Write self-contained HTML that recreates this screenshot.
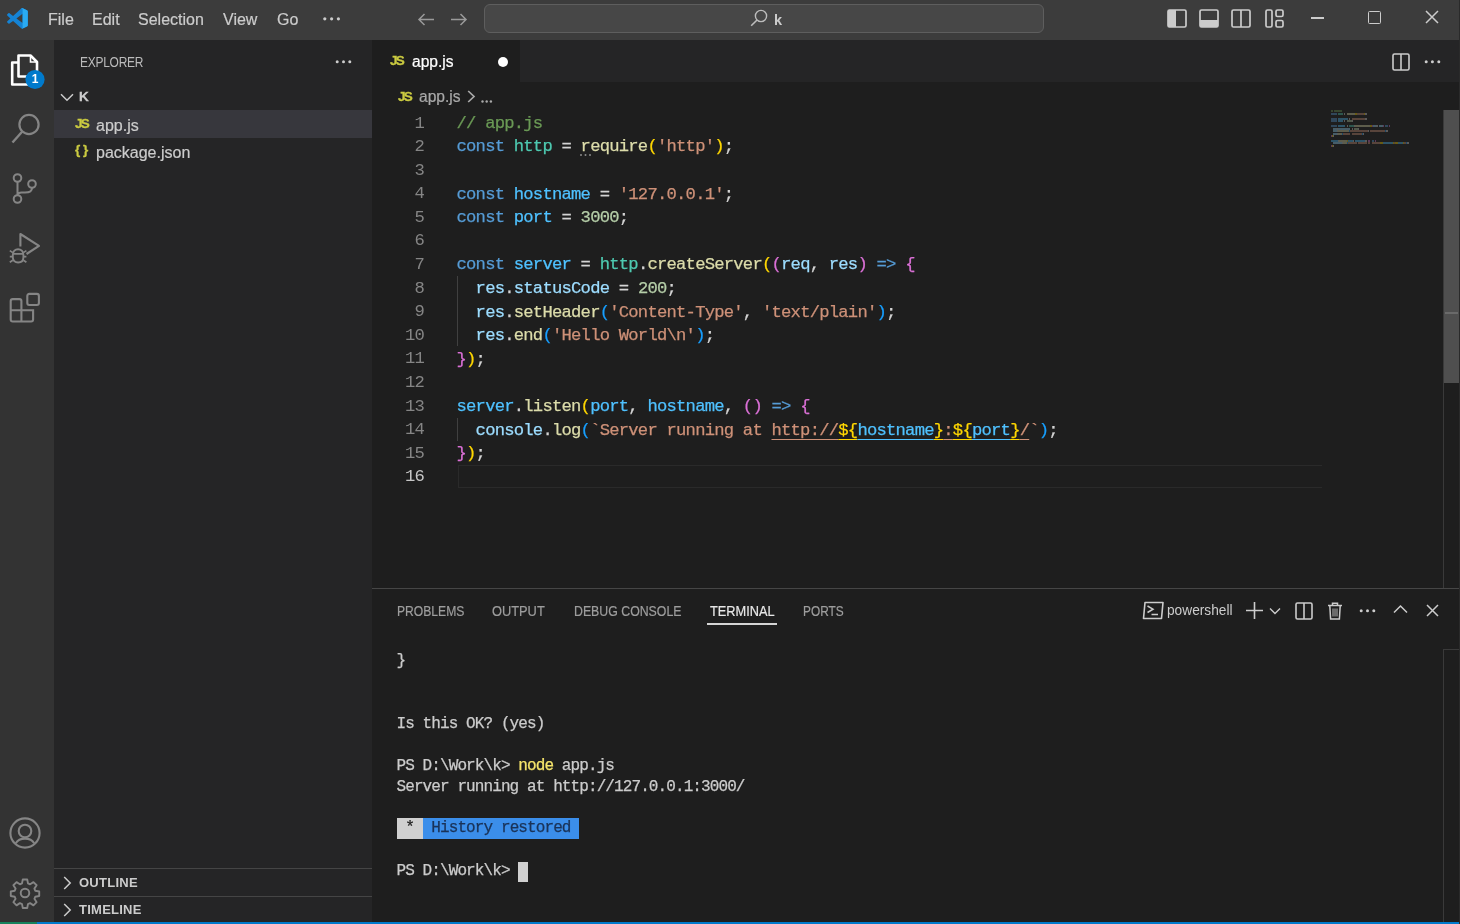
<!DOCTYPE html>
<html><head><meta charset="utf-8">
<style>
*{margin:0;padding:0;box-sizing:border-box}
html,body{width:1460px;height:924px;overflow:hidden;background:#1e1e1e;}
body{filter:blur(0.4px);font-family:"Liberation Sans",sans-serif;color:#cccccc}
.a{position:absolute}
svg{position:absolute;overflow:visible}
#title{left:0;top:0;width:1460px;height:40px;background:#3c3c3c}
.menu{top:10.5px;font-size:16px;color:#cccccc;line-height:18px;-webkit-text-stroke:0.2px currentColor}
#act{left:0;top:40px;width:54px;height:882px;background:#333333}
#side{left:54px;top:40px;width:318px;height:882px;background:#252526}
#tabs{left:372px;top:40px;width:1088px;height:42px;background:#252526}
#tab1{left:372px;top:40px;width:148px;height:42px;background:#1e1e1e}
#editor{left:372px;top:82px;width:1088px;height:506px;background:#1e1e1e}
#panel{left:372px;top:588px;width:1088px;height:334px;background:#1e1e1e;border-top:1px solid #464646}
#status{left:0;top:922px;width:1460px;height:2px;background:#007acc}
.code{font-family:"Liberation Mono",monospace;font-size:17.2px;letter-spacing:-0.77px;white-space:pre;line-height:23.6px;-webkit-text-stroke:0.25px currentColor}
.ln{font-family:"Liberation Mono",monospace;font-size:17.2px;letter-spacing:-0.77px;color:#858585;text-align:right;line-height:23.6px}
.term{font-family:"Liberation Mono",monospace;font-size:16px;letter-spacing:-0.9px;white-space:pre;line-height:20.95px;color:#cccccc;-webkit-text-stroke:0.25px currentColor}
.k{color:#569cd6}.cm{color:#6a9955}.v{color:#9cdcfe}.c{color:#4fc1ff}.t{color:#4ec9b0}.f{color:#dcdcaa}.s{color:#ce9178}.n{color:#b5cea8}.p{color:#d4d4d4}
.b1{color:#ffd700}.b2{color:#da70d6}.b3{color:#179fff}
.u{text-decoration:underline;text-decoration-color:currentColor;text-decoration-skip-ink:none;text-decoration-thickness:1.4px;text-underline-offset:4px}
.ptab{top:602.8px;font-size:14px;color:#9d9d9d;line-height:16px;transform-origin:0 0;-webkit-text-stroke:0.2px currentColor}
.side-t{font-size:16px;line-height:18px;color:#cccccc;-webkit-text-stroke:0.2px currentColor}
.js{font-family:"Liberation Sans",sans-serif;font-weight:bold;color:#cbcb41;font-size:13.5px;letter-spacing:-1.7px;line-height:12px;-webkit-text-stroke:0.3px currentColor}
#mini i{position:absolute;height:2px}
.sec{font-size:13px;font-weight:bold;letter-spacing:0.25px;color:#cccccc;line-height:14px}
</style></head><body>
<div id="title" class="a"></div>
<div id="act" class="a"></div>
<div id="side" class="a"></div>
<div id="tabs" class="a"></div>
<div id="tab1" class="a"></div>
<div id="editor" class="a"></div>
<div id="panel" class="a"></div>
<div id="status" class="a"></div>
<div class="a" style="left:0;top:922px;width:37px;height:2px;background:#16825d"></div>
<div class="a" style="left:1459px;top:0;width:1px;height:924px;background:#2a2a2a"></div>

<!-- ===== title bar ===== -->
<svg style="left:6.6px;top:7.5px" width="20.8" height="20.8" viewBox="0 0 100 100">
  <path fill="#1583d4" d="M96 10.8 75.5 1c-2.4-1.1-5.2-.6-7.1 1.2L29.2 38 12.1 25c-1.6-1.2-3.8-1.1-5.2.2l-5.5 5c-1.8 1.6-1.8 4.5 0 6.1L16.2 50 1.4 63.6c-1.8 1.6-1.8 4.5 0 6.1l5.5 5c1.5 1.3 3.7 1.4 5.2.2L29.2 62l39.2 35.8c1.9 1.8 4.7 2.3 7.1 1.2L96 89.2c2.5-1.2 4-3.7 4-6.4V17.2c0-2.7-1.6-5.2-4-6.4zM75 72.7 45.3 50 75 27.3z"/>
  <path fill="#2aabf3" d="M68.4 97.8c1.9 1.8 4.7 2.3 7.1 1.2L96 89.2c2.5-1.2 4-3.7 4-6.4V17.2c0-2.7-1.6-5.2-4-6.4L75.5 1c-2.4-1.1-5.2-.6-7.1 1.2 2.3-2.3 6.6-.7 6.6 2.6v90.4c0 3.3-4.3 4.9-6.6 2.6z"/>
</svg>
<div class="a menu" style="left:48px">File</div>
<div class="a menu" style="left:92px">Edit</div>
<div class="a menu" style="left:138px">Selection</div>
<div class="a menu" style="left:223px">View</div>
<div class="a menu" style="left:277px">Go</div>
<svg style="left:323px;top:17px" width="18" height="4"><circle cx="1.8" cy="1.8" r="1.6" fill="#cccccc"/><circle cx="8.6" cy="1.8" r="1.6" fill="#cccccc"/><circle cx="15.4" cy="1.8" r="1.6" fill="#cccccc"/></svg>
<!-- nav arrows -->
<svg style="left:417px;top:13px" width="18" height="13" viewBox="0 0 18 13"><path d="M17 6.5H2M7.5 1 2 6.5 7.5 12" fill="none" stroke="#9a9a9a" stroke-width="1.5"/></svg>
<svg style="left:450px;top:13px" width="18" height="13" viewBox="0 0 18 13"><path d="M1 6.5H16M10.5 1 16 6.5 10.5 12" fill="none" stroke="#9a9a9a" stroke-width="1.5"/></svg>
<!-- search box -->
<div class="a" style="left:484px;top:4px;width:560px;height:29px;border-radius:6px;background:#474747;border:1px solid #5e5e5e"></div>
<svg style="left:750px;top:9px" width="18" height="18" viewBox="0 0 18 18"><circle cx="11" cy="7" r="5.6" fill="none" stroke="#bdbdbd" stroke-width="1.4"/><path d="M7 11 1.2 16.8" stroke="#bdbdbd" stroke-width="1.6"/></svg>
<div class="a" style="left:774px;top:11.5px;font-size:14.5px;font-weight:bold;line-height:17px;color:#cccccc">k</div>
<!-- layout icons -->
<svg style="left:1167px;top:9px" width="20" height="19" viewBox="0 0 20 19"><rect x="1" y="1" width="18" height="17" rx="1.5" fill="none" stroke="#cccccc" stroke-width="1.7"/><rect x="1" y="1" width="8" height="17" fill="#cccccc"/></svg>
<svg style="left:1199px;top:9px" width="20" height="19" viewBox="0 0 20 19"><rect x="1" y="1" width="18" height="17" rx="1.5" fill="none" stroke="#cccccc" stroke-width="1.7"/><rect x="1" y="11" width="18" height="7" fill="#cccccc"/></svg>
<svg style="left:1231px;top:9px" width="20" height="19" viewBox="0 0 20 19"><rect x="1" y="1" width="18" height="17" rx="1.5" fill="none" stroke="#cccccc" stroke-width="1.7"/><path d="M10 1V18" stroke="#cccccc" stroke-width="1.7"/></svg>
<svg style="left:1265px;top:9px" width="19" height="19" viewBox="0 0 19 19"><rect x="1" y="1" width="6" height="17" rx="1.5" fill="none" stroke="#cccccc" stroke-width="1.7"/><rect x="11" y="1" width="7" height="6.5" rx="1.5" fill="none" stroke="#cccccc" stroke-width="1.7"/><rect x="11" y="11.5" width="7" height="6.5" rx="1.5" fill="none" stroke="#cccccc" stroke-width="1.7"/></svg>
<div class="a" style="left:1311px;top:17px;width:13px;height:1.6px;background:#cccccc"></div>
<div class="a" style="left:1368px;top:11px;width:13px;height:12.5px;border:1.5px solid #cccccc;border-radius:1.5px"></div>
<svg style="left:1425px;top:10px" width="14" height="14" viewBox="0 0 14 14"><path d="M1 1 13 13M13 1 1 13" stroke="#cccccc" stroke-width="1.5"/></svg>

<!-- ===== activity bar ===== -->
<svg style="left:10px;top:53px" width="30" height="34" viewBox="0 0 30 34">
  <path d="M8.5 9.5H2.2V31.5H19V25" fill="none" stroke="#ffffff" stroke-width="2.6" stroke-linejoin="round"/>
  <path d="M8.5 2.5H20.5L27 9V23.5H8.5Z" fill="none" stroke="#ffffff" stroke-width="2.6" stroke-linejoin="round"/>
  <path d="M20.5 2.5V9H27" fill="none" stroke="#ffffff" stroke-width="1.6"/>
</svg>
<svg style="left:25px;top:69px" width="21" height="21"><circle cx="10" cy="10.5" r="9.6" fill="#007acc" stroke="#333333" stroke-width="0"/></svg>
<div class="a" style="left:25px;top:71px;width:20px;text-align:center;font-size:12px;font-weight:bold;color:#ffffff;line-height:16px">1</div>
<svg style="left:11px;top:113px" width="30" height="31" viewBox="0 0 30 31"><circle cx="18" cy="11.5" r="9.6" fill="none" stroke="#858585" stroke-width="2.2"/><path d="M11.3 18.5 1.5 29.5" stroke="#858585" stroke-width="2.4"/></svg>
<svg style="left:12px;top:173px" width="26" height="32" viewBox="0 0 26 32"><circle cx="5.5" cy="5" r="3.8" fill="none" stroke="#858585" stroke-width="2"/><circle cx="20" cy="11" r="3.8" fill="none" stroke="#858585" stroke-width="2"/><circle cx="5.5" cy="26" r="3.8" fill="none" stroke="#858585" stroke-width="2"/><path d="M5.5 9V22M20 15C20 18 17 19.5 13 19.5H9.5C7 19.5 5.5 21 5.5 22" fill="none" stroke="#858585" stroke-width="2"/></svg>
<svg style="left:9px;top:232px" width="32" height="32" viewBox="0 0 32 32"><path d="M11.4 14.5V2L30 13.9 17.5 22" fill="none" stroke="#858585" stroke-width="2.1" stroke-linejoin="round"/><path d="M3.8 23C3.8 19.3 6.2 17.2 9.1 17.2S14.4 19.3 14.4 23V25.2C14.4 28.6 12.2 30.5 9.1 30.5S3.8 28.6 3.8 25.2Z" fill="none" stroke="#858585" stroke-width="1.9"/><path d="M3.8 21.8H14.4M0.8 18.6 3.8 20.6M0.8 24.6H3.8M0.8 30.2 3.8 28.2M17.4 18.6 14.4 20.6M17.4 24.6H14.4M17.4 30.2 14.4 28.2" fill="none" stroke="#858585" stroke-width="1.7"/></svg>
<svg style="left:9px;top:293px" width="32" height="31" viewBox="0 0 32 31"><path d="M12.4 17.3H24.1V26.5Q24.1 28.5 22.1 28.5H3.7Q1.7 28.5 1.7 26.5V8.1Q1.7 6.1 3.7 6.1H10.4Q12.4 6.1 12.4 8.1V28.5M1.7 17.3H12.4" fill="none" stroke="#858585" stroke-width="2.1"/><rect x="18.3" y="0.9" width="11.6" height="11.1" rx="2" fill="none" stroke="#858585" stroke-width="2.1"/></svg>
<svg style="left:9px;top:817px" width="32" height="32" viewBox="0 0 32 32"><circle cx="16" cy="16" r="14.6" fill="none" stroke="#858585" stroke-width="2.1"/><circle cx="16" cy="14" r="6.3" fill="none" stroke="#858585" stroke-width="2.1"/><path d="M6.8 26.2C8.5 23.2 11.5 21.6 16 21.6S23.5 23.2 25.2 26.2" fill="none" stroke="#858585" stroke-width="2.1"/></svg>
<svg style="left:9px;top:877px" width="32" height="32" viewBox="0 0 32 32"><g transform="translate(16 16) scale(0.93) translate(-16 -16)"><path d="M13.6 1.5h4.8l.8 4.2 2.3 1 3.6-2.4 3.4 3.4-2.4 3.6 1 2.3 4.2.8v4.8l-4.2.8-1 2.3 2.4 3.6-3.4 3.4-3.6-2.4-2.3 1-.8 4.2h-4.8l-.8-4.2-2.3-1-3.6 2.4-3.4-3.4 2.4-3.6-1-2.3-4.2-.8v-4.8l4.2-.8 1-2.3-2.4-3.6 3.4-3.4 3.6 2.4 2.3-1z" fill="none" stroke="#858585" stroke-width="2" stroke-linejoin="round"/><circle cx="16" cy="16" r="4.6" fill="none" stroke="#858585" stroke-width="2.1"/></g></svg>

<!-- ===== side bar ===== -->
<div class="a" style="left:79.5px;top:54px;font-size:14.6px;letter-spacing:-0.3px;line-height:16px;color:#bbbbbb;transform:scaleX(0.82);transform-origin:0 0">EXPLORER</div>
<svg style="left:335px;top:60px" width="18" height="4"><circle cx="2.2" cy="1.8" r="1.5" fill="#cccccc"/><circle cx="8.5" cy="1.8" r="1.5" fill="#cccccc"/><circle cx="14.8" cy="1.8" r="1.5" fill="#cccccc"/></svg>
<svg style="left:60px;top:93px" width="14" height="9" viewBox="0 0 14 9"><path d="M1 1.2 7 7.2 13 1.2" fill="none" stroke="#cccccc" stroke-width="1.5"/></svg>
<div class="a" style="left:79px;top:89px;font-size:13.5px;font-weight:bold;line-height:16px;color:#cccccc;-webkit-text-stroke:0.3px currentColor">K</div>
<div class="a" style="left:54px;top:110px;width:318px;height:28px;background:#37373d"></div>
<div class="a js" style="left:75px;top:118px">JS</div>
<div class="a side-t" style="left:96px;top:116.5px">app.js</div>
<div class="a" style="left:75px;top:142px;font-family:'Liberation Sans',sans-serif;font-weight:bold;color:#cbcb41;font-size:13.5px;line-height:16px;letter-spacing:-0.5px;-webkit-text-stroke:0.3px currentColor">{ }</div>
<div class="a side-t" style="left:96px;top:144.2px">package.json</div>
<div class="a" style="left:54px;top:868px;width:318px;height:1px;background:#454545"></div>
<svg style="left:63px;top:876px" width="9" height="14" viewBox="0 0 9 14"><path d="M1.2 1 7.2 7 1.2 13" fill="none" stroke="#cccccc" stroke-width="1.5"/></svg>
<div class="a sec" style="left:79px;top:876px">OUTLINE</div>
<div class="a" style="left:54px;top:896px;width:318px;height:1px;background:#454545"></div>
<svg style="left:63px;top:903px" width="9" height="14" viewBox="0 0 9 14"><path d="M1.2 1 7.2 7 1.2 13" fill="none" stroke="#cccccc" stroke-width="1.5"/></svg>
<div class="a sec" style="left:79px;top:903px">TIMELINE</div>

<!-- ===== tabs ===== -->
<div class="a js" style="left:390px;top:55px">JS</div>
<div class="a" style="left:412px;top:53px;font-size:15.6px;line-height:18px;color:#ffffff;-webkit-text-stroke:0.2px currentColor">app.js</div>
<div class="a" style="left:497.5px;top:56.5px;width:10.5px;height:10.5px;border-radius:50%;background:#ffffff"></div>
<svg style="left:1392px;top:53px" width="18" height="18" viewBox="0 0 18 18"><rect x="1" y="1" width="16" height="16" rx="1.5" fill="none" stroke="#cccccc" stroke-width="1.6"/><path d="M9 1V17" stroke="#cccccc" stroke-width="1.6"/></svg>
<svg style="left:1424px;top:60px" width="18" height="4"><circle cx="2.2" cy="1.8" r="1.5" fill="#cccccc"/><circle cx="8.4" cy="1.8" r="1.5" fill="#cccccc"/><circle cx="14.8" cy="1.8" r="1.5" fill="#cccccc"/></svg>
<!-- breadcrumb -->
<div class="a js" style="left:398px;top:91px">JS</div>
<div class="a" style="left:419px;top:88px;font-size:15.6px;line-height:18px;color:#a9a9a9;-webkit-text-stroke:0.2px currentColor">app.js</div>
<svg style="left:467px;top:90px" width="9" height="13" viewBox="0 0 9 13"><path d="M1.2 1 7 6.5 1.2 12" fill="none" stroke="#a9a9a9" stroke-width="1.7"/></svg>
<svg style="left:481px;top:100px" width="12" height="3"><circle cx="1.5" cy="1.5" r="1.2" fill="#a9a9a9"/><circle cx="5.7" cy="1.5" r="1.2" fill="#a9a9a9"/><circle cx="9.9" cy="1.5" r="1.2" fill="#a9a9a9"/></svg>

<!-- ===== editor ===== -->
<div class="a" style="left:457.5px;top:465px;width:864px;height:23px;border:1.5px solid #2a2a2a;border-right:none"></div>
<div class="a" style="left:457px;top:276px;width:1px;height:70px;background:#404040"></div>
<div class="a" style="left:457px;top:418px;width:1px;height:23px;background:#404040"></div>
<div class="a ln" style="left:372px;width:52px;top:111.5px">1<br>2<br>3<br>4<br>5<br>6<br>7<br>8<br>9<br>10<br>11<br>12<br>13<br>14<br>15<br><span style="color:#c6c6c6">16</span></div>
<div class="a code" style="left:456.5px;top:111.8px"><span class="cm">// app.js</span>
<span class="k">const</span> <span class="t">http</span> <span class="p">=</span> <span class="f">require</span><span class="b1">(</span><span class="s">'http'</span><span class="b1">)</span><span class="p">;</span>

<span class="k">const</span> <span class="c">hostname</span> <span class="p">=</span> <span class="s">'127.0.0.1'</span><span class="p">;</span>
<span class="k">const</span> <span class="c">port</span> <span class="p">=</span> <span class="n">3000</span><span class="p">;</span>

<span class="k">const</span> <span class="c">server</span> <span class="p">=</span> <span class="t">http</span><span class="p">.</span><span class="f">createServer</span><span class="b1">(</span><span class="b2">(</span><span class="v">req</span><span class="p">,</span> <span class="v">res</span><span class="b2">)</span> <span class="k">=&gt;</span> <span class="b2">{</span>
  <span class="v">res</span><span class="p">.</span><span class="v">statusCode</span> <span class="p">=</span> <span class="n">200</span><span class="p">;</span>
  <span class="v">res</span><span class="p">.</span><span class="f">setHeader</span><span class="b3">(</span><span class="s">'Content-Type'</span><span class="p">,</span> <span class="s">'text/plain'</span><span class="b3">)</span><span class="p">;</span>
  <span class="v">res</span><span class="p">.</span><span class="f">end</span><span class="b3">(</span><span class="s">'Hello World\n'</span><span class="b3">)</span><span class="p">;</span>
<span class="b2">}</span><span class="b1">)</span><span class="p">;</span>

<span class="c">server</span><span class="p">.</span><span class="f">listen</span><span class="b1">(</span><span class="c">port</span><span class="p">,</span> <span class="c">hostname</span><span class="p">,</span> <span class="b2">()</span> <span class="k">=&gt;</span> <span class="b2">{</span>
  <span class="v">console</span><span class="p">.</span><span class="f">log</span><span class="b3">(</span><span class="s">`Server running at </span><span class="s u">http://</span><span class="b1 u">${</span><span class="c u">hostname</span><span class="b1 u">}</span><span class="s u">:</span><span class="b1 u">${</span><span class="c u">port</span><span class="b1 u">}</span><span class="s u">/</span><span class="s">`</span><span class="b3">)</span><span class="p">;</span>
<span class="b2">}</span><span class="b1">)</span><span class="p">;</span>
</div>
<svg style="left:579px;top:153px" width="16" height="4"><circle cx="2" cy="2" r="1" fill="#8a8a8a"/><circle cx="6.5" cy="2" r="1" fill="#8a8a8a"/><circle cx="11" cy="2" r="1" fill="#8a8a8a"/></svg>
<!-- minimap -->
<div class="a" id="mini" style="left:1330.6px;top:110.2px;width:90px;height:40px;opacity:0.33"><i style="left:0.00px;top:0.00px;width:2.48px;background:#6a9955"></i><i style="left:3.72px;top:0.00px;width:7.44px;background:#6a9955"></i><i style="left:0.00px;top:2.48px;width:6.20px;background:#569cd6"></i><i style="left:7.44px;top:2.48px;width:4.96px;background:#4ec9b0"></i><i style="left:13.64px;top:2.48px;width:1.24px;background:#d4d4d4"></i><i style="left:16.12px;top:2.48px;width:8.68px;background:#dcdcaa"></i><i style="left:24.80px;top:2.48px;width:1.24px;background:#ffd700"></i><i style="left:26.04px;top:2.48px;width:7.44px;background:#ce9178"></i><i style="left:33.48px;top:2.48px;width:1.24px;background:#ffd700"></i><i style="left:34.72px;top:2.48px;width:1.24px;background:#d4d4d4"></i><i style="left:0.00px;top:7.44px;width:6.20px;background:#569cd6"></i><i style="left:7.44px;top:7.44px;width:9.92px;background:#4fc1ff"></i><i style="left:18.60px;top:7.44px;width:1.24px;background:#d4d4d4"></i><i style="left:21.08px;top:7.44px;width:13.64px;background:#ce9178"></i><i style="left:34.72px;top:7.44px;width:1.24px;background:#d4d4d4"></i><i style="left:0.00px;top:9.92px;width:6.20px;background:#569cd6"></i><i style="left:7.44px;top:9.92px;width:4.96px;background:#4fc1ff"></i><i style="left:13.64px;top:9.92px;width:1.24px;background:#d4d4d4"></i><i style="left:16.12px;top:9.92px;width:4.96px;background:#b5cea8"></i><i style="left:21.08px;top:9.92px;width:1.24px;background:#d4d4d4"></i><i style="left:0.00px;top:14.88px;width:6.20px;background:#569cd6"></i><i style="left:7.44px;top:14.88px;width:7.44px;background:#4fc1ff"></i><i style="left:16.12px;top:14.88px;width:1.24px;background:#d4d4d4"></i><i style="left:18.60px;top:14.88px;width:4.96px;background:#4ec9b0"></i><i style="left:23.56px;top:14.88px;width:1.24px;background:#d4d4d4"></i><i style="left:24.80px;top:14.88px;width:14.88px;background:#dcdcaa"></i><i style="left:39.68px;top:14.88px;width:1.24px;background:#ffd700"></i><i style="left:40.92px;top:14.88px;width:1.24px;background:#da70d6"></i><i style="left:42.16px;top:14.88px;width:3.72px;background:#9cdcfe"></i><i style="left:45.88px;top:14.88px;width:1.24px;background:#d4d4d4"></i><i style="left:48.36px;top:14.88px;width:3.72px;background:#9cdcfe"></i><i style="left:52.08px;top:14.88px;width:1.24px;background:#da70d6"></i><i style="left:54.56px;top:14.88px;width:2.48px;background:#569cd6"></i><i style="left:58.28px;top:14.88px;width:1.24px;background:#da70d6"></i><i style="left:2.48px;top:17.36px;width:3.72px;background:#9cdcfe"></i><i style="left:6.20px;top:17.36px;width:1.24px;background:#d4d4d4"></i><i style="left:7.44px;top:17.36px;width:12.40px;background:#9cdcfe"></i><i style="left:21.08px;top:17.36px;width:1.24px;background:#d4d4d4"></i><i style="left:23.56px;top:17.36px;width:3.72px;background:#b5cea8"></i><i style="left:27.28px;top:17.36px;width:1.24px;background:#d4d4d4"></i><i style="left:2.48px;top:19.84px;width:3.72px;background:#9cdcfe"></i><i style="left:6.20px;top:19.84px;width:1.24px;background:#d4d4d4"></i><i style="left:7.44px;top:19.84px;width:11.16px;background:#dcdcaa"></i><i style="left:18.60px;top:19.84px;width:1.24px;background:#179fff"></i><i style="left:19.84px;top:19.84px;width:17.36px;background:#ce9178"></i><i style="left:37.20px;top:19.84px;width:1.24px;background:#d4d4d4"></i><i style="left:39.68px;top:19.84px;width:14.88px;background:#ce9178"></i><i style="left:54.56px;top:19.84px;width:1.24px;background:#179fff"></i><i style="left:55.80px;top:19.84px;width:1.24px;background:#d4d4d4"></i><i style="left:2.48px;top:22.32px;width:3.72px;background:#9cdcfe"></i><i style="left:6.20px;top:22.32px;width:1.24px;background:#d4d4d4"></i><i style="left:7.44px;top:22.32px;width:3.72px;background:#dcdcaa"></i><i style="left:11.16px;top:22.32px;width:1.24px;background:#179fff"></i><i style="left:12.40px;top:22.32px;width:7.44px;background:#ce9178"></i><i style="left:21.08px;top:22.32px;width:9.92px;background:#ce9178"></i><i style="left:31.00px;top:22.32px;width:1.24px;background:#179fff"></i><i style="left:32.24px;top:22.32px;width:1.24px;background:#d4d4d4"></i><i style="left:0.00px;top:24.80px;width:1.24px;background:#da70d6"></i><i style="left:1.24px;top:24.80px;width:1.24px;background:#ffd700"></i><i style="left:2.48px;top:24.80px;width:1.24px;background:#d4d4d4"></i><i style="left:0.00px;top:29.76px;width:7.44px;background:#4fc1ff"></i><i style="left:7.44px;top:29.76px;width:1.24px;background:#d4d4d4"></i><i style="left:8.68px;top:29.76px;width:7.44px;background:#dcdcaa"></i><i style="left:16.12px;top:29.76px;width:1.24px;background:#ffd700"></i><i style="left:17.36px;top:29.76px;width:4.96px;background:#4fc1ff"></i><i style="left:22.32px;top:29.76px;width:1.24px;background:#d4d4d4"></i><i style="left:24.80px;top:29.76px;width:9.92px;background:#4fc1ff"></i><i style="left:34.72px;top:29.76px;width:1.24px;background:#d4d4d4"></i><i style="left:37.20px;top:29.76px;width:2.48px;background:#da70d6"></i><i style="left:40.92px;top:29.76px;width:2.48px;background:#569cd6"></i><i style="left:44.64px;top:29.76px;width:1.24px;background:#da70d6"></i><i style="left:2.48px;top:32.24px;width:8.68px;background:#9cdcfe"></i><i style="left:11.16px;top:32.24px;width:1.24px;background:#d4d4d4"></i><i style="left:12.40px;top:32.24px;width:3.72px;background:#dcdcaa"></i><i style="left:16.12px;top:32.24px;width:1.24px;background:#179fff"></i><i style="left:17.36px;top:32.24px;width:8.68px;background:#ce9178"></i><i style="left:27.28px;top:32.24px;width:8.68px;background:#ce9178"></i><i style="left:37.20px;top:32.24px;width:2.48px;background:#ce9178"></i><i style="left:40.92px;top:32.24px;width:8.68px;background:#ce9178"></i><i style="left:49.60px;top:32.24px;width:2.48px;background:#ffd700"></i><i style="left:52.08px;top:32.24px;width:9.92px;background:#4fc1ff"></i><i style="left:62.00px;top:32.24px;width:1.24px;background:#ffd700"></i><i style="left:63.24px;top:32.24px;width:1.24px;background:#ce9178"></i><i style="left:64.48px;top:32.24px;width:2.48px;background:#ffd700"></i><i style="left:66.96px;top:32.24px;width:4.96px;background:#4fc1ff"></i><i style="left:71.92px;top:32.24px;width:1.24px;background:#ffd700"></i><i style="left:73.16px;top:32.24px;width:2.48px;background:#ce9178"></i><i style="left:75.64px;top:32.24px;width:1.24px;background:#179fff"></i><i style="left:76.88px;top:32.24px;width:1.24px;background:#d4d4d4"></i><i style="left:0.00px;top:34.72px;width:1.24px;background:#da70d6"></i><i style="left:1.24px;top:34.72px;width:1.24px;background:#ffd700"></i><i style="left:2.48px;top:34.72px;width:1.24px;background:#d4d4d4"></i></div>
<!-- scrollbar -->
<div class="a" style="left:1443px;top:110px;width:1px;height:478px;background:#3a3a3a"></div>
<div class="a" style="left:1444px;top:110px;width:15px;height:273px;background:#4f4f4f"></div>
<div class="a" style="left:1445px;top:312px;width:13px;height:2px;background:#6a6a6a"></div>

<!-- ===== panel ===== -->
<div class="a ptab" style="left:396.7px;transform:scaleX(0.866)">PROBLEMS</div>
<div class="a ptab" style="left:492.4px;transform:scaleX(0.916)">OUTPUT</div>
<div class="a ptab" style="left:573.6px;transform:scaleX(0.88)">DEBUG CONSOLE</div>
<div class="a ptab" style="left:710px;color:#e7e7e7;transform:scaleX(0.912)">TERMINAL</div>
<div class="a ptab" style="left:803.4px;transform:scaleX(0.847)">PORTS</div>
<div class="a" style="left:707px;top:623px;width:70px;height:2px;background:#d4d4d4"></div>
<!-- panel actions -->
<svg style="left:1142px;top:601px" width="22" height="19" viewBox="0 0 22 19"><path d="M3 1.5H21L19.5 17.5H1.5Z" fill="none" stroke="#cccccc" stroke-width="1.6" stroke-linejoin="round"/><path d="M5.5 5 11 8.2 5.5 11.5M9.5 13.5H16" fill="none" stroke="#cccccc" stroke-width="1.5"/></svg>
<div class="a" style="left:1167.2px;top:602px;font-size:14.5px;line-height:16px;color:#cccccc;transform:scaleX(0.945);transform-origin:0 0">powershell</div>
<svg style="left:1246px;top:602px" width="17" height="17" viewBox="0 0 17 17"><path d="M8.5 0V17M0 8.5H17" stroke="#cccccc" stroke-width="1.6"/></svg>
<svg style="left:1269px;top:607px" width="12" height="8" viewBox="0 0 12 8"><path d="M1 1.5 6 6.5 11 1.5" fill="none" stroke="#cccccc" stroke-width="1.4"/></svg>
<svg style="left:1295px;top:602px" width="18" height="18" viewBox="0 0 18 18"><rect x="1" y="1" width="16" height="16" rx="1.5" fill="none" stroke="#cccccc" stroke-width="1.6"/><path d="M9 1V17" stroke="#cccccc" stroke-width="1.6"/></svg>
<svg style="left:1327px;top:602px" width="16" height="18" viewBox="0 0 16 18"><path d="M1 3.5H15M5.5 3.5V1.2H10.5V3.5M2.8 3.5 3.6 17H12.4L13.2 3.5" fill="none" stroke="#cccccc" stroke-width="1.5"/><path d="M6 6.5V14.5M8 6.5V14.5M10 6.5V14.5" fill="none" stroke="#cccccc" stroke-width="0.9"/></svg>
<svg style="left:1359px;top:609px" width="18" height="4"><circle cx="2.2" cy="1.8" r="1.5" fill="#cccccc"/><circle cx="8.5" cy="1.8" r="1.5" fill="#cccccc"/><circle cx="14.8" cy="1.8" r="1.5" fill="#cccccc"/></svg>
<svg style="left:1393px;top:605px" width="15" height="9" viewBox="0 0 15 9"><path d="M1 7.5 7.5 1 14 7.5" fill="none" stroke="#cccccc" stroke-width="1.5"/></svg>
<svg style="left:1426px;top:604px" width="13" height="13" viewBox="0 0 13 13"><path d="M1 1 12 12M12 1 1 12" stroke="#cccccc" stroke-width="1.5"/></svg>
<!-- terminal scrollbar border -->
<div class="a" style="left:1443px;top:649px;width:1px;height:273px;background:#3a3a3a"></div>
<div class="a" style="left:1443px;top:649px;width:16px;height:1px;background:#3a3a3a"></div>

<div class="a term" style="left:396.5px;top:651px">}


Is this OK? (yes)

PS D:\Work\k&gt; <span style="color:#f5e46b">node</span> app.js
Server running at http://127.0.0.1:3000/

<span style="background:#d0d0d0;color:#1e1e1e;display:inline-block;height:21px;vertical-align:top;position:relative;top:-1px"> * </span><span style="background:#3b8eea;color:#1a3358;display:inline-block;height:21px;vertical-align:top;position:relative;top:-1px"> History restored </span>

PS D:\Work\k&gt; <span style="background:#d0d0d0;display:inline-block;width:10px;height:20px;vertical-align:top;margin-top:1px"></span></div>

</body></html>
